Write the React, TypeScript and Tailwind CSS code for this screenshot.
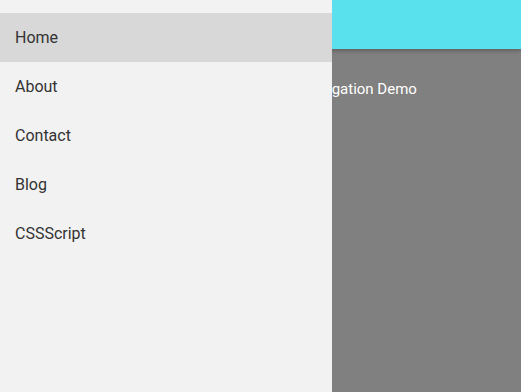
import React from "react";

export default function App() {
  const items = ["Home", "About", "Contact", "Blog", "CSSScript"];
  return (
    <div className="relative w-full h-[392px] overflow-hidden bg-[#808080]" style={{ fontFamily: "Roboto, 'Noto Sans', sans-serif" }}>
      <div className="h-[49px] bg-[#59e1ee] shadow-[0_2px_4px_rgba(0,0,0,0.25)]" />
      <div className="pt-[29px] pl-[302px] text-[15px] font-normal text-white">Navigation Demo</div>
      <nav className="absolute left-0 top-0 w-[332px] h-full bg-[#f2f2f2] pt-[13px]">
        {items.map((it, i) => (
          <div
            key={it}
            className={`h-[49px] flex items-center pl-[15px] text-[16px] text-[#333] ${i === 0 ? "bg-[#d8d8d8]" : ""}`}
          >
            {it}
          </div>
        ))}
      </nav>
    </div>
  );
}
